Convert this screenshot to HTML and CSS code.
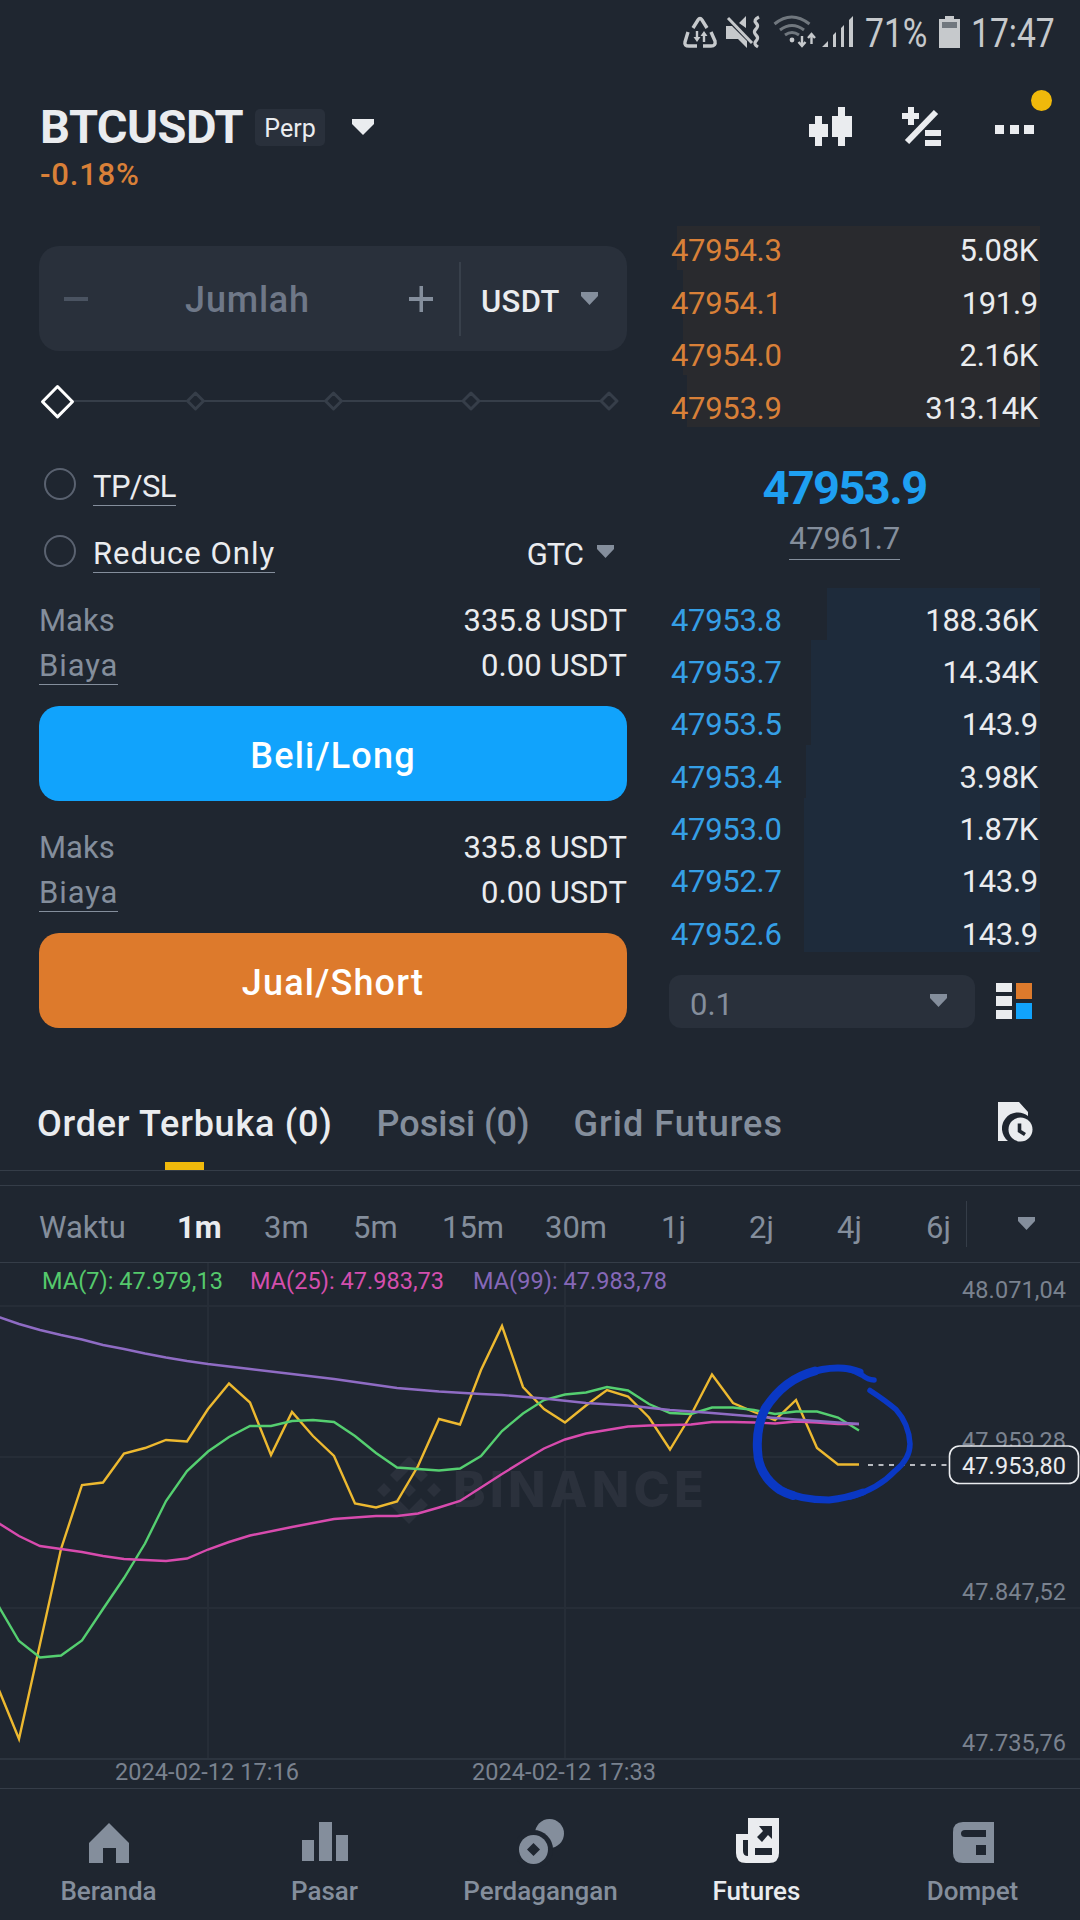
FILE: index.html
```html
<!DOCTYPE html>
<html lang="id">
<head>
  <meta charset="UTF-8">
  <meta name="viewport" content="width=device-width, initial-scale=1.0">
  <title>BTCUSDT Perp</title>
  <link rel="stylesheet" href="styles.css">
</head>
<body>
  <div class="status-bar">
    <svg class="status-icons" viewBox="680 0 176 56" width="176" height="56" fill="none" stroke="#c6c9cc" stroke-width="3">
      <!-- recycle -->
      <path d="M693 28l5-8q2-3 4 0l5 8M688 32l-3 10q-1 4 4 4h8M711 32l4 9q1 5-4 5h-8" stroke-width="3.4"/>
      <path d="M697 31v8M704 42v-8" stroke-width="2.4"/>
      <path d="M693.500 37h7l-3.500 5zM700.500 36h7l-3.500-5z" fill="#c6c9cc" stroke="none"/>
      <!-- muted + vibrate -->
      <path d="M726 26h6l15 15v7l-9-9h-12zM739 23l7-7v12z" fill="#c6c9cc" stroke="none"/>
      <path d="M728 18l24 25"/>
      <path d="M759 17q-6 3-3 6t0 6t0 6t0 6t2 6" stroke-width="3.200"/>
      <!-- wifi -->
      <g stroke="#70777e">
        <path d="M774.500 24q17-14 35 0M780 30q12-9 24 0"/>
        <path d="M785 35q7-5 14 0"/>
      </g>
      <circle cx="792" cy="40" r="2.400" fill="#c6c9cc" stroke="none"/>
      <path d="M802 36v9M798.500 42l3.500 4 3.500-4M811.500 44v-9M808 38l3.500-4 3.500 4" stroke-width="2.400"/>
      <!-- signal -->
      <path d="M822 47l6-6v6zM833 47v-12l3-3v15zM841 47v-19l3-3v22zM849 47v-27l4-4v31z" fill="#c6c9cc" stroke="none"/>
    </svg>
    <span class="status-text battery-text">71%</span>
    <svg class="battery" viewBox="0 0 22 34" width="22" height="34">
      <path d="M6 1h9v3h6v29H0V4h6z" fill="#c6c9cc"/>
      <path d="M3 7h15v6H3z" fill="#70777e"/>
    </svg>
    <span class="status-text clock">17:47</span>
  </div>

  <header class="header">
    <div class="pair">
      <div class="pair-name">
        <h1>BTCUSDT</h1>
        <span class="tag">Perp</span>
        <svg width="22" height="16" viewBox="0 0 22 16" fill="#eaecef"><path d="M0 0h22v5L11 16 0 5z"/></svg>
      </div>
      <div class="change">-0.18%</div>
    </div>
    <div class="header-icons">
      <svg width="44" height="40" viewBox="0 0 44 40" fill="#eaecef">
        <path d="M6 9h7v8h6v13h-6v9H6v-9H0V17h6zM29 0h7v9h7v21h-7v9h-7v-9h-6V9h6z"/>
      </svg>
      <svg width="40" height="40" viewBox="0 0 40 40" fill="#eaecef">
        <path d="M6 0h6v6h5v6h-5v6H6v-6H0V6h6zM23 23h16v6H23zM23 33h16v6H23z"/>
        <path d="M5 35L34 5" stroke="#eaecef" stroke-width="6"/>
      </svg>
      <span class="more">
        <svg width="40" height="10" viewBox="0 0 40 10" fill="#eaecef"><path d="M0 0h9v9H0zM15 0h9v9h-9zM29 0h10v9H29z"/></svg>
        <i class="dot"></i>
      </span>
    </div>
  </header>

  <main class="trade">
    <section class="order-form">
      <div class="amount">
        <span class="minus"></span>
        <span class="placeholder">Jumlah</span>
        <svg class="plus" width="24" height="26" viewBox="0 0 24 26" fill="#848e9c"><path d="M10.500 0h3.500v11h10v4H14v11h-3.500V15H0v-4h10.500z"/></svg>
        <div class="unit">
          <span>USDT</span>
          <svg width="17" height="13" viewBox="0 0 17 13" fill="#848e9c"><path d="M0 0h17v4L8.500 13 0 4z"/></svg>
        </div>
      </div>

      <svg class="slider" width="588" height="40" viewBox="0 0 588 40" fill="#1f2630" stroke="#363e49" stroke-width="3">
        <path d="M32 20H562" stroke-width="2"/>
        <path d="M156.500 12l8 8-8 8-8-8zM294.500 12l8 8-8 8-8-8zM432 12l8 8-8 8-8-8zM570 12l8 8-8 8-8-8z" stroke-linejoin="round"/>
        <path d="M18.500 5.500l15 15.200-15 15.200-15-15.200z" stroke="#fff" stroke-linejoin="round"/>
      </svg>

      <div class="option">
        <span class="radio"></span>
        <span class="underlined tpsl">TP/SL</span>
      </div>
      <div class="option last">
        <span class="radio"></span>
        <span class="underlined reduce">Reduce Only</span>
        <span class="tif">GTC
          <svg width="17" height="13" viewBox="0 0 17 13" fill="#848e9c"><path d="M0 0h17v4L8.500 13 0 4z"/></svg>
        </span>
      </div>

      <div class="info"><span>Maks</span><b>335.8 USDT</b></div>
      <div class="info"><span class="underlined">Biaya</span><b>0.00 USDT</b></div>
      <button class="btn buy">Beli/Long</button>

      <div class="info"><span>Maks</span><b>335.8 USDT</b></div>
      <div class="info"><span class="underlined">Biaya</span><b>0.00 USDT</b></div>
      <button class="btn sell">Jual/Short</button>
    </section>

    <section class="book">
      <div class="asks">
        <div class="row"><i style="width:363px"></i><span>47954.3</span><b>5.08K</b></div>
        <div class="row"><i style="width:357px"></i><span>47954.1</span><b>191.9</b></div>
        <div class="row"><i style="width:357px"></i><span>47954.0</span><b>2.16K</b></div>
        <div class="row"><i style="width:353px"></i><span>47953.9</span><b>313.14K</b></div>
      </div>
      <div class="mid">
        <div class="last-price">47953.9</div>
        <span class="mark-price">47961.7</span>
      </div>
      <div class="bids">
        <div class="row"><i style="width:213px"></i><span>47953.8</span><b>188.36K</b></div>
        <div class="row"><i style="width:229px"></i><span>47953.7</span><b>14.34K</b></div>
        <div class="row"><i style="width:229px"></i><span>47953.5</span><b>143.9</b></div>
        <div class="row"><i style="width:234px"></i><span>47953.4</span><b>3.98K</b></div>
        <div class="row"><i style="width:236px"></i><span>47953.0</span><b>1.87K</b></div>
        <div class="row"><i style="width:236px"></i><span>47952.7</span><b>143.9</b></div>
        <div class="row"><i style="width:236px"></i><span>47952.6</span><b>143.9</b></div>
      </div>
      <div class="book-tools">
        <div class="precision">
          <span>0.1</span>
          <svg width="17" height="13" viewBox="0 0 17 13" fill="#848e9c"><path d="M0 0h17v4L8.500 13 0 4z"/></svg>
        </div>
        <svg width="37" height="37" viewBox="0 0 37 37">
          <path d="M0 0h16v9H0zM0 13h16v10H0zM0 27h16v9H0z" fill="#eaecef"/>
          <path d="M20 0h16v16H20z" fill="#dd7a2c"/>
          <path d="M20 20h16v16H20z" fill="#11a3fc"/>
        </svg>
      </div>
    </section>
  </main>

  <nav class="tabs">
    <a class="tab active">Order Terbuka (0)</a>
    <a class="tab">Posisi (0)</a>
    <a class="tab wide">Grid Futures</a>
    <svg class="history" width="36" height="40" viewBox="0 0 36 40">
      <path d="M0 0h21l9 10v4A15 15 0 0 0 10 39H0z" fill="#eaecef"/>
      <circle cx="22.500" cy="27.500" r="12" fill="#eaecef"/>
      <path d="M21.500 21.500v7.500l5.500 3.500" fill="none" stroke="#1f2630" stroke-width="3.600"/>
    </svg>
  </nav>

  <div class="intervals">
    <span>Waktu</span>
    <span class="active">1m</span>
    <span>3m</span>
    <span>5m</span>
    <span>15m</span>
    <span>30m</span>
    <span>1j</span>
    <span>2j</span>
    <span>4j</span>
    <span>6j</span>
    <div class="more-intervals">
      <svg width="17" height="13" viewBox="0 0 17 13" fill="#848e9c"><path d="M0 0h17v4L8.500 13 0 4z"/></svg>
    </div>
  </div>

  <svg class="chart" width="1080" height="525" viewBox="0 1263 1080 525">
    <!-- grid -->
    <path class="grid" d="M0 1306H1080M0 1457H1080M0 1608H1080M208 1263V1759M565 1263V1759"/>
    <path class="axis" d="M0 1759H1080"/>

    <!-- watermark -->
    <g class="watermark">
      <path d="M409 1456l19 19-7 7-12-12-12 12-7-7zM409 1524l19-19-7-7-12 12-12-12-7 7zM409 1483l7 7-7 7-7-7zM384 1483l7 7-7 7-7-7zM434 1483l7 7-7 7-7-7z"/>
      <text x="453" y="1507" textLength="251">BINANCE</text>
    </g>

    <g class="legend">
      <text x="42" y="1289" textLength="181" fill="#55c96c">MA(7): 47.979,13</text>
      <text x="250" y="1289" textLength="194" fill="#d44fae">MA(25): 47.983,73</text>
      <text x="473" y="1289" textLength="194" fill="#8668b8">MA(99): 47.983,78</text>
    </g>

    <g class="labels">
      <text x="962" y="1298" textLength="104">48.071,04</text>
      <text x="962" y="1449" textLength="104">47.959,28</text>
      <text x="962" y="1600" textLength="104">47.847,52</text>
      <text x="962" y="1751" textLength="104">47.735,76</text>
      <text x="115" y="1780" textLength="184">2024-02-12 17:16</text>
      <text x="472" y="1780" textLength="184">2024-02-12 17:33</text>
    </g>

    <g class="lines">
      <polyline stroke="#edb930" points="-2,1688 0,1692.500 19,1739 61,1549 82,1485 103,1482.500 124,1453.500 145,1448 166,1440 187,1441.500 208,1409 229,1383.500 250,1402.500 271,1455 292,1412 313,1436 334,1456 355,1503.500 376,1507.500 397,1501.500 418,1466 439,1419 460,1424.500 481,1370 502,1326 523,1387 544,1409 565,1422.500 586,1405.500 607,1390 628,1396.500 649,1417.500 670,1449.500 691,1415 712,1374.500 733,1403 754,1412 775,1420 796,1400 817,1448 838,1464.500 859,1464.500"/>
      <polyline stroke="#55cf70" points="-2,1605 0,1608.500 19,1641 40,1657.500 61,1655.500 82,1640.500 103,1609 124,1578 145,1543.500 166,1501 187,1471 208,1451.500 229,1437 250,1426 271,1426 292,1421 313,1420 334,1422 355,1436 376,1453 397,1467.500 418,1469 439,1470.500 460,1468.500 481,1456 502,1431 523,1413.500 544,1400 565,1394.500 586,1392.500 607,1387 628,1390.500 649,1404 670,1413 691,1414 712,1407.500 733,1407.500 754,1410 775,1414 796,1411.500 817,1411.500 838,1417.500 859,1430.500"/>
      <polyline stroke="#d84bae" points="-2,1522.500 0,1524 19,1536 40,1546 61,1549 82,1552 103,1556 124,1559 145,1560 166,1561 187,1558.500 208,1549.500 229,1542 250,1535.500 292,1527 313,1523 334,1519 355,1517.500 376,1516 397,1516 418,1513.500 439,1507.500 460,1501 481,1487.500 502,1474 523,1461 544,1448.500 565,1439.500 586,1433.500 607,1430 628,1426.500 649,1425.500 670,1425 691,1424.500 712,1422 733,1422 754,1422.500 775,1423.500 796,1421.500 817,1422.500 838,1424 859,1424"/>
      <polyline stroke="#8f6cc4" points="-2,1317 0,1317.500 19,1324 40,1330 61,1335 82,1339.500 103,1345 124,1349 145,1353.500 166,1357.500 187,1361 208,1364 250,1369 292,1374 334,1379 376,1385 397,1388 439,1391.500 481,1394 502,1395 544,1398.500 586,1403 628,1405.500 670,1410 712,1413 754,1416.500 796,1419.500 838,1422.500 859,1424"/>
    </g>

    <!-- current price -->
    <path d="M868 1465H948" stroke="#eaecef" stroke-width="1.500" stroke-dasharray="5 5.500"/>
    <rect x="949.500" y="1446" width="129" height="37.500" rx="10" fill="#1f2630" stroke="#eaecef" stroke-width="1.600"/>
    <text class="price-now" x="962" y="1474" textLength="104">47.953,80</text>

    <!-- pen mark -->
    <g class="pen">
      <path stroke-width="5.500" d="M874 1380Q868 1380 862 1375Q850 1368 838 1368"/>
      <path stroke-width="7" d="M860 1372Q850 1368 838 1368Q822 1368 806 1374"/>
      <path stroke-width="9" d="M815 1371Q784 1379 765 1409Q756 1428 757.500 1450Q758 1475 780 1490Q785 1493 793 1495.500"/>
      <path stroke-width="7" d="M780 1490Q800 1500 829 1500Q847 1498 863 1492"/>
      <path stroke-width="5.500" d="M850 1497Q878 1489 895 1471Q910 1459 910 1444Q909 1424 896 1409.500Q886 1401 870 1390.500"/>
    </g>
  </svg>

  <nav class="bottom-nav">
    <a>
      <svg width="48" height="50" viewBox="0 0 48 50"><path d="M24 5l20 20v20H31V30H18v15H4V25z"/></svg>
      Beranda
    </a>
    <a>
      <svg width="48" height="50" viewBox="0 0 48 50"><path d="M1 22h12v21H1zM18 4h13v39H18zM35 17h12v26H35z"/></svg>
      Pasar
    </a>
    <a>
      <svg width="48" height="50" viewBox="0 0 48 50">
        <circle cx="32.500" cy="15.500" r="14.500"/>
        <circle cx="16.500" cy="31.500" r="19.500" class="hole"/>
        <circle cx="16.500" cy="31.500" r="14.500"/>
        <path d="M16.500 25l6.500 6.500-6.500 6.500-6.500-6.500z" class="hole"/>
      </svg>
      Perdagangan
    </a>
    <a class="active">
      <svg width="48" height="50" viewBox="0 0 48 50">
        <path d="M15 0h31v35q0 10-10 10H13Q3 45 3 35V16h12z"/>
        <path d="M10 22h5v16q-5 0-5-5zM22 30h17v7H22zM26 8h13v13l-4-4-6 7-5-5 6-6z" class="hole"/>
      </svg>
      Futures
    </a>
    <a>
      <svg width="48" height="50" viewBox="0 0 48 50">
        <path d="M14 4h31v41H14Q4 45 4 35V14Q4 4 14 4z"/>
        <path d="M16 12h21v7H16q-4 0-4-3.500t4-3.500zM27 27h10v10H27z" class="hole"/>
      </svg>
      Dompet
    </a>
  </nav>
</body>
</html>
```
FILE: styles.css
```css
* {
  box-sizing: border-box;
}
body {
  margin: 0;
  width: 1080px;
  height: 1920px;
  overflow: hidden;
  background: #1f2630;
  color: #eaecef;
  font-family: Roboto, "Liberation Sans", sans-serif;
  font-size: 31px;
}
svg {
  display: block;
  flex: none;
}

/* status bar */
.status-bar {
  height: 64px;
  padding: 0 25px 0 680px;
  display: flex;
  align-items: flex-start;
}
.status-text {
  display: block;
  font-size: 40px;
  line-height: 68px;
  color: #c6c9cc;
  white-space: nowrap;
  transform: scaleX(0.84);
  transform-origin: left;
}
.battery-text {
  width: 73px;
  margin: 0 0 0 9px;
}
.battery {
  margin: 15px 10px 0 1px;
}
.clock {
  width: 82px;
}

/* header */
.header {
  height: 162px;
  padding: 37px 39px 0 40px;
  display: flex;
  justify-content: space-between;
}
.pair-name {
  display: flex;
  align-items: center;
  height: 52px;
}
h1 {
  margin: 0;
  width: 215px;
  font-size: 47px;
  line-height: 52px;
  font-weight: 700;
  letter-spacing: -0.5px;
}
.tag {
  width: 70px;
  height: 37px;
  margin-right: 27px;
  border-radius: 5px;
  background: #29303b;
  font-size: 25px;
  line-height: 39px;
  text-align: center;
}
.change {
  font-size: 31px;
  font-weight: 500;
  line-height: 44px;
  letter-spacing: 0.8px;
  color: #d98038;
}
.header-icons {
  display: flex;
  gap: 49px;
  padding-top: 6px;
}
.more {
  position: relative;
  width: 46px;
  padding-top: 18px;
  margin-left: 4px;
}
.dot {
  position: absolute;
  top: -17px;
  left: 36px;
  width: 21px;
  height: 21px;
  border-radius: 50%;
  background: #f0b90b;
}

/* trading area */
.trade {
  display: flex;
  justify-content: space-between;
  height: 844px;
  padding: 0 40px 0 39px;
}
.order-form {
  width: 588px;
  padding-top: 20px;
}
.amount {
  display: flex;
  align-items: center;
  height: 105px;
  border-radius: 20px;
  background: #29303b;
}
.minus {
  width: 24px;
  height: 4px;
  margin-left: 25px;
  background: #4a5361;
}
.placeholder {
  width: 321px;
  padding: 3px 2px 0 0;
  text-align: center;
  font-size: 36px;
  font-weight: 500;
  color: #6f7888;
  letter-spacing: 0.8px;
}
.unit {
  display: flex;
  align-items: center;
  justify-content: space-between;
  width: 139px;
  height: 74px;
  margin-left: 26px;
  padding: 6px 0 0 20px;
  border-left: 2px solid #38404b;
  font-weight: 500;
  letter-spacing: 0.3px;
}
.unit svg {
  margin-top: -6px;
}
.slider {
  margin: 30px 0 46px;
}
.option {
  display: flex;
  height: 67px;
  padding: 1px 13px 0 5px;
}
.option.last {
  height: 64px;
}
.radio {
  width: 32px;
  height: 32px;
  margin-right: 17px;
  border: 2px solid #5a6270;
  border-radius: 50%;
}
.underlined {
  height: 38px;
  line-height: 37px;
  border-bottom: 1px solid #848e9c;
}
.tpsl {
  letter-spacing: -0.6px;
}
.reduce {
  letter-spacing: 1px;
}
.tif {
  display: flex;
  gap: 14px;
  margin-left: auto;
  line-height: 40px;
  letter-spacing: -1px;
}
.tif svg {
  margin-top: 10px;
}
.info {
  display: flex;
  align-items: center;
  justify-content: space-between;
  height: 45px;
  color: #848e9c;
}
.info .underlined {
  letter-spacing: 0.9px;
}
.info b {
  font-weight: 400;
  color: #eaecef;
  letter-spacing: 0.1px;
}
.btn {
  display: block;
  width: 588px;
  height: 95px;
  margin: 18px 0 24px;
  padding: 5px 0 0;
  border: none;
  border-radius: 20px;
  font: 500 36px Roboto, "Liberation Sans", sans-serif;
  letter-spacing: 1.2px;
  color: #fff;
}
.buy {
  background: #11a3fc;
}
.sell {
  background: #dd7a2c;
}

/* order book */
.book {
  width: 371px;
}
.asks, .bids {
  display: flex;
  flex-direction: column;
  overflow: hidden;
}
.asks {
  height: 201px;
  justify-content: flex-end;
  color: #d98038;
}
.asks .row {
  padding-top: 14px;
}
.bids {
  height: 364px;
  color: #359fe6;
}
.row {
  position: relative;
  display: flex;
  flex: none;
  justify-content: space-between;
  height: 52.4px;
  padding: 12.5px 2px 0 2px;
  line-height: 40px;
  letter-spacing: -0.3px;
}
.row i {
  position: absolute;
  top: 0;
  right: 0;
  height: 52.4px;
  background: #292a2e;
}
.bids .row i {
  background: #1e2b3b;
}
.row span, .row b {
  position: relative;
  font-weight: 400;
}
.row b {
  color: #eaecef;
}
.mid {
  height: 161px;
  padding: 32px 20px 0 0;
  text-align: center;
}
.last-price {
  font-size: 47px;
  font-weight: 700;
  line-height: 57px;
  letter-spacing: -1.6px;
  color: #1ea0f2;
}
.mark-price {
  display: inline-block;
  margin-top: 3px;
  line-height: 40px;
  letter-spacing: -0.3px;
  border-bottom: 1px solid #848e9c;
  color: #848e9c;
}
.book-tools {
  display: flex;
  align-items: center;
  justify-content: space-between;
  margin-top: 23px;
  padding-right: 7px;
}
.precision {
  display: flex;
  align-items: center;
  justify-content: space-between;
  width: 306px;
  height: 53px;
  padding: 5px 28px 0 21px;
  border-radius: 12px;
  background: #29303b;
  color: #848e9c;
}
.precision svg {
  margin-top: -8px;
}

/* tabs */
.tabs {
  display: flex;
  height: 101px;
  padding: 0 46px 0 37px;
  border-bottom: 1px solid #353d48;
}
.tab {
  margin-right: 44px;
  padding-top: 33px;
  font-size: 36px;
  line-height: 42px;
  font-weight: 500;
  color: #848e9c;
}
.tab.active {
  letter-spacing: 0.75px;
  color: #eaecef;
}
.tab.active::after {
  content: "";
  display: block;
  width: 39px;
  height: 8px;
  margin: 17px auto 0;
  background: #f0b90b;
}
.tab.wide {
  letter-spacing: 1px;
}
.history {
  margin: 32px 0 0 auto;
}

/* intervals */
.intervals {
  display: grid;
  grid-template-columns: 138px 87px 89px 89px 103px 116px 88px 88px 89px 40px 1fr;
  align-items: center;
  height: 78px;
  margin-top: 14px;
  padding: 6px 0 0 39px;
  border-top: 1px solid #353d48;
  border-bottom: 1px solid #353d48;
  color: #848e9c;
}
.intervals .active {
  font-weight: 700;
  color: #eaecef;
}
.more-intervals {
  height: 46px;
  margin-top: -6px;
  padding: 16px 0 0 51px;
  border-left: 1px solid #353d48;
}

/* chart */
.chart {
  font-size: 23.5px;
}
.grid {
  stroke: #262d37;
  stroke-width: 2;
}
.axis {
  stroke: #2c343f;
  stroke-width: 2;
}
.watermark {
  fill: #2b313c;
  font: 800 49px Inter, sans-serif;
}
.labels {
  fill: #7a828f;
}
.lines {
  fill: none;
  stroke-width: 2.4;
}
.price-now {
  fill: #eaecef;
}
.pen {
  fill: none;
  stroke: #0a38c4;
  stroke-linecap: round;
}

/* bottom navigation */
.bottom-nav {
  display: grid;
  grid-template-columns: repeat(5, 1fr);
  height: 132px;
  border-top: 1px solid #353d48;
}
.bottom-nav a {
  display: flex;
  flex-direction: column;
  align-items: center;
  padding: 29px 0 0 1px;
  font-size: 26px;
  line-height: 46px;
  font-weight: 500;
  color: #848e9c;
  fill: #848e9c;
}
.bottom-nav .active {
  color: #eaecef;
  fill: #eaecef;
}
.bottom-nav .hole {
  fill: #1f2630;
}
```
